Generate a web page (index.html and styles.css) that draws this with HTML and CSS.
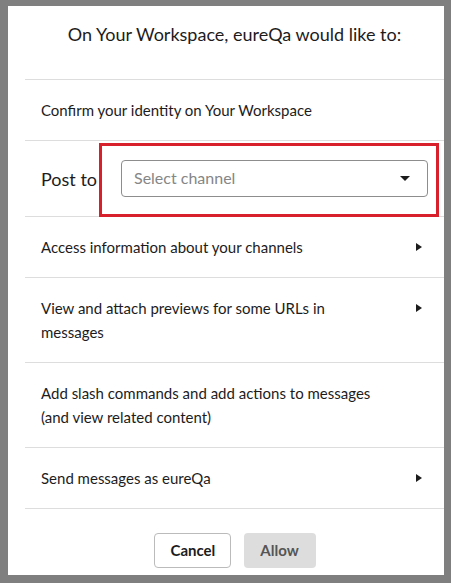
FILE: index.html
```html
<!DOCTYPE html>
<html>
<head>
  <meta charset="utf-8">
  <title>Authorize eureQa</title>
  <link rel="stylesheet" href="styles.css">
</head>

<body>
  <div class="dialog">
    <div class="dialog-body">
      <h1 class="title">On Your Workspace, eureQa would like to:</h1>

      <ul class="scopes">
        <li class="scope">
          <span class="scope-text">Confirm your identity on Your Workspace</span>
        </li>

        <li class="scope post-row">
          <span class="post-label">Post to</span>
          <div class="select">
            <span class="select-placeholder">Select channel</span>
            <span class="caret-down"></span>
          </div>
          <div class="highlight"></div>
        </li>

        <li class="scope">
          <span class="scope-text">Access information about your channels</span>
          <span class="caret-right"></span>
        </li>

        <li class="scope">
          <span class="scope-text">View and attach previews for some URLs in messages</span>
          <span class="caret-right"></span>
        </li>

        <li class="scope">
          <span class="scope-text">Add slash commands and add actions to messages (and view related content)</span>
        </li>

        <li class="scope">
          <span class="scope-text">Send messages as eureQa</span>
          <span class="caret-right"></span>
        </li>
      </ul>

      <div class="actions">
        <button type="button" class="btn btn-cancel">Cancel</button>
        <button type="button" class="btn btn-allow" disabled>Allow</button>
      </div>
    </div>
  </div>
</body>
</html>
```

FILE: styles.css
```css
body {
  margin: 0;
  padding: 6px 7px 8px 8px;
  background-color: #7f7f7f;
  font-family: Lato, "Noto Sans", sans-serif;
  color: #1d1c1d;
}

.dialog {
  background-color: white;
  height: 569px;
  padding-left: 17px;
  box-sizing: border-box;
}

.title {
  margin: 0;
  padding: 16px 0 33px;
  font-size: 18px;
  font-weight: normal;
  line-height: 24px;
  text-align: center;
}

.scopes {
  list-style: none;
  margin: 0;
  padding: 0;
  border-bottom: 1px solid #ddd;
}

.scope {
  display: flex;
  align-items: flex-start;
  border-top: 1px solid #ddd;
  padding: 18px 22px 18px 16px;
  font-size: 15px;
  line-height: 24px;
}

.scope-text {
  flex: 0 0 345px;
}

.caret-right {
  margin-left: auto;
  margin-top: 8px;
  width: 0;
  height: 0;
  border-top: 4.5px solid transparent;
  border-bottom: 4.5px solid transparent;
  border-left: 6.5px solid #1d1c1d;
}

/* channel picker row */
.post-row {
  position: relative;
  align-items: center;
  padding: 19px 16px 19px 16px;
}

.post-label {
  font-size: 18px;
  width: 80px;
}

.select {
  display: flex;
  align-items: center;
  width: 307px;
  height: 37px;
  box-sizing: border-box;
  border: 1px solid #8d8d8d;
  border-radius: 4px;
  padding: 0 17px 0 12px;
}

.select-placeholder {
  color: #868686;
  font-size: 16px;
  margin-top: -2px;
}

.caret-down {
  margin-left: auto;
  width: 0;
  height: 0;
  border-left: 5px solid transparent;
  border-right: 5px solid transparent;
  border-top: 5px solid #1d1c1d;
}

.highlight {
  position: absolute;
  left: 74px;
  top: 2px;
  width: 340px;
  height: 74px;
  box-sizing: border-box;
  border: 3px solid #d7202c;
  pointer-events: none;
}

.actions {
  display: flex;
  justify-content: center;
  gap: 13px;
  padding-top: 24px;
}

.btn {
  height: 35px;
  border-radius: 4px;
  font-family: inherit;
  font-size: 15px;
  font-weight: bold;
  padding: 0 16px;
  padding-bottom: 2px;
  cursor: pointer;
}

.btn-cancel {
  width: 77px;
  background-color: white;
  border: 1px solid #bbb;
  color: #1d1c1d;
}

.btn-allow {
  width: 72px;
  background-color: #dddddd;
  border: none;
  color: #555;
  cursor: not-allowed;
}
```
